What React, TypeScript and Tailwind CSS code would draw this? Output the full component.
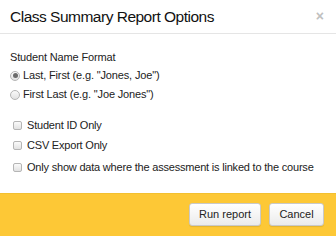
import React from 'react'

const font = { fontFamily: '"Liberation Sans", Arial, sans-serif' }

function Radio({ checked, label }: { checked?: boolean; label: string }) {
    return (
        <label className="flex items-center h-[19px]">
            <span className="ml-[10px] w-[10px] h-[10px] rounded-full border border-[#b5b5b5] bg-gradient-to-b from-[#fafafa] to-[#e2e2e2] flex items-center justify-center">
                {checked && <span className="w-[5px] h-[5px] rounded-full bg-[#6b6b6b]" />}
            </span>
            <span className="ml-[3px] text-[11px] tracking-[-0.15px] text-[#222] whitespace-nowrap">{label}</span>
        </label>
    )
}

function Check({ label }: { label: string }) {
    return (
        <label className="flex items-center h-[14px]">
            <span className="ml-[13px] w-[9px] h-[9px] rounded-[2px] border border-[#b5b5b5] bg-gradient-to-b from-[#fafafa] to-[#e2e2e2]" />
            <span className="ml-[5px] text-[11px] tracking-[-0.2px] text-[#222] whitespace-nowrap">{label}</span>
        </label>
    )
}

export default function App() {
    return (
        <div className="w-[336px] h-[236px] bg-white flex flex-col overflow-hidden" style={font}>
            <div className="h-[34px] border-b border-[#e5e5e5] flex items-center justify-between px-[10px]">
                <span className="text-[15.5px] text-[#111] tracking-[-0.5px]">Class Summary Report Options</span>
                <span className="text-[14px] text-[#c0c0c0] font-bold mr-[2px]">×</span>
            </div>
            <div className="flex-1 flex flex-col pt-[14px]">
                <div className="ml-[10px] text-[11px] tracking-[-0.15px] text-[#222] h-[18px] leading-[18px]">Student Name Format</div>
                <div>
                    <Radio checked label={'Last, First (e.g. "Jones, Joe")'} />
                    <Radio label={'First Last (e.g. "Joe Jones")'} />
                </div>
                <div className="mt-[14px] flex flex-col gap-[6px]">
                    <Check label="Student ID Only" />
                    <Check label="CSV Export Only" />
                    <div className="mt-[2px]"><Check label="Only show data where the assessment is linked to the course" /></div>
                </div>
            </div>
            <div className="h-[43px] bg-[#fdc836] border-t border-[#f3c030] flex items-center justify-end gap-[8px] pr-[12px] pb-[1px]">
                <button className="h-[23px] w-[72px] rounded-[3px] border border-[#c9c9c9] bg-gradient-to-b from-white to-[#ebebeb] text-[11px] text-[#222] shadow-[0_1px_1px_rgba(0,0,0,0.1)]">Run report</button>
                <button className="h-[23px] w-[55px] rounded-[3px] border border-[#c9c9c9] bg-gradient-to-b from-white to-[#ebebeb] text-[11px] text-[#222] shadow-[0_1px_1px_rgba(0,0,0,0.1)]">Cancel</button>
            </div>
        </div>
    )
}
